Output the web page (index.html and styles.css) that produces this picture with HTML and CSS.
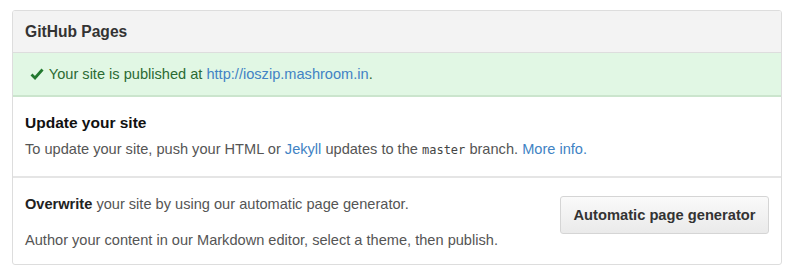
FILE: index.html
```html
<!DOCTYPE html>
<html lang="en">
<head>
    <meta charset="UTF-8">
    <title>GitHub Pages</title>
    <link rel="stylesheet" href="styles.css">
</head>
<body>
    <div class="boxed-group">
        <h3 class="boxed-title">GitHub Pages</h3>

        <!-- Published notice -->
        <div class="flash-success">
            <svg class="check" viewBox="0 0 14 12" width="14" height="12"><path d="M1.5 6.5l3.5 3.5 7.5-8.5"/></svg>
            Your site is published at <a href="#">http://ioszip.mashroom.in</a>.
        </div>

        <div class="section">
            <h4>Update your site</h4>
            <p>To update your site, push your HTML or <a href="#">Jekyll</a> updates to the <code>master</code> branch. <a href="#">More info.</a></p>
        </div>

        <div class="section generator">
            <div class="generator-text">
                <p><strong>Overwrite</strong> your site by using our automatic page generator.</p>
                <p>Author your content in our Markdown editor, select a theme, then publish.</p>
            </div>
            <button class="btn">Automatic page generator</button>
        </div>
    </div>
</body>
</html>
```

FILE: styles.css
```css
:root {
    --border-color: #dddddd;
    --link-color: #4183c4;
    --text-color: #555555;
}

* {
    margin: 0;
    padding: 0;
    box-sizing: border-box;
}

body {
    padding: 10px 18px 0 12px;
    background: #ffffff;
    font-family: "Liberation Sans", Arial, sans-serif;
    font-size: 14.6px;
    color: var(--text-color);
}

a {
    color: var(--link-color);
    text-decoration: none;
}

.boxed-group {
    border: 1px solid var(--border-color);
    border-radius: 3px;
    overflow: hidden;
}

.boxed-title {
    height: 42px;
    padding: 0 12px;
    line-height: 41px;
    background: #f3f3f3;
    border-bottom: 1px solid var(--border-color);
    font-size: 15.6px;
    color: #333333;
}

/* Success notice */
.flash-success {
    height: 44px;
    padding: 0 12px 0 17px;
    line-height: 42px;
    background: #e1f7e4;
    border-bottom: 2px solid #cbe5cd;
    color: #2b6a33;
}

.check {
    fill: none;
    stroke: #22792f;
    stroke-width: 2.8;
    vertical-align: -1px;
    margin-right: 1px;
}

.section {
    padding: 17px 12px 16px;
    border-bottom: 2px solid #e5e5e5;
}

.section:last-child {
    border-bottom: 0;
}

.section h4 {
    font-size: 15.5px;
    color: #111111;
    margin-bottom: 7px;
}

.section p {
    line-height: 20px;
}

code {
    font-family: "DejaVu Sans Mono", monospace;
    font-size: 12px;
    color: #444444;
}

/* Page generator row */
.generator {
    display: flex;
    align-items: flex-start;
    justify-content: space-between;
    padding: 16px 12px 14px;
}

.generator-text p + p {
    margin-top: 16px;
}

.generator strong {
    color: #222222;
}

.btn {
    margin-top: 2px;
    width: 209px;
    height: 38px;
    border: 1px solid #d5d5d5;
    border-radius: 3px;
    background: linear-gradient(#fafafa, #eaeaea);
    font-family: "Liberation Sans", Arial, sans-serif;
    font-size: 14.7px;
    font-weight: bold;
    color: #333333;
}
```
